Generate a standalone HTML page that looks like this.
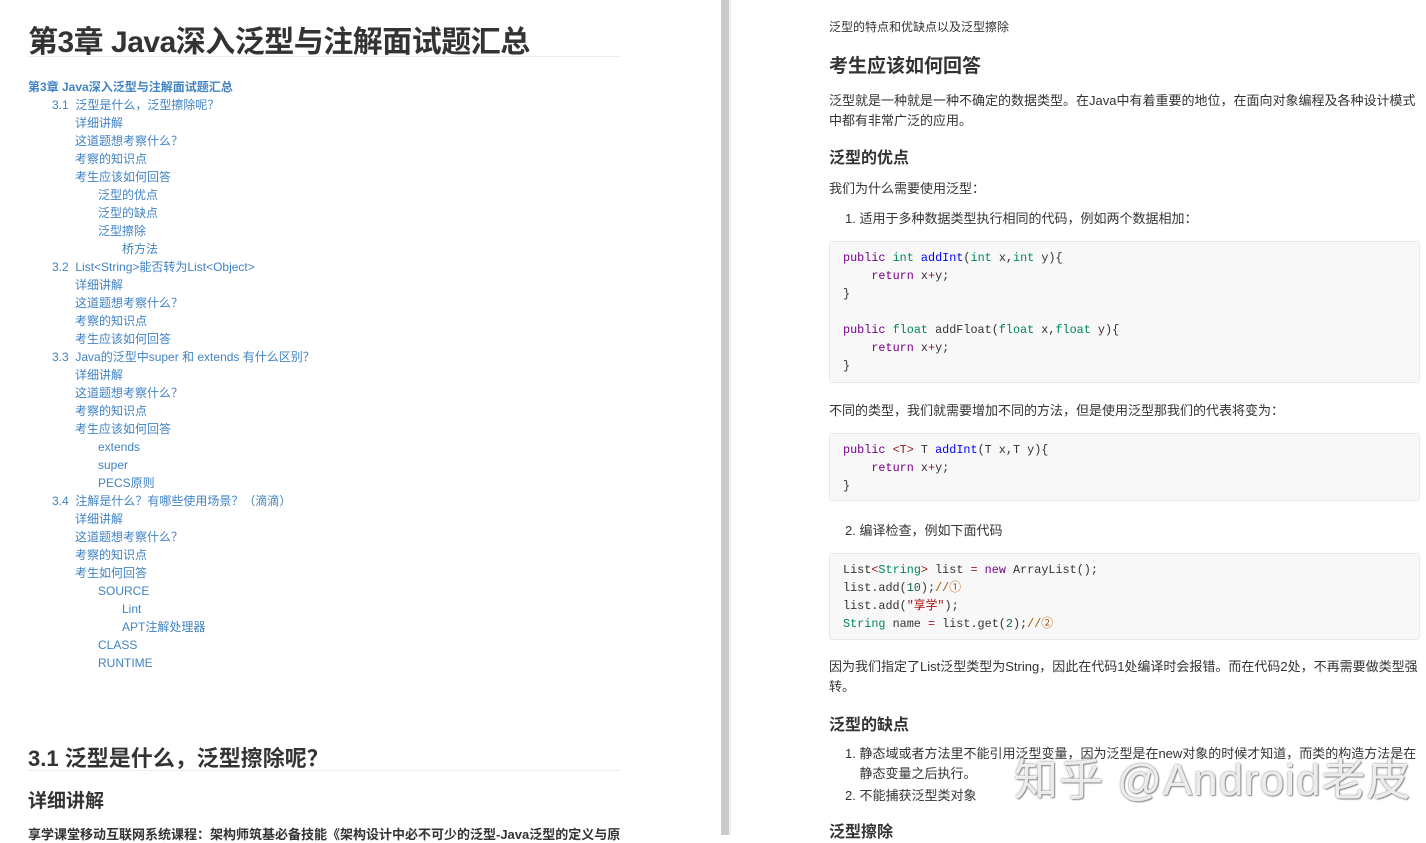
<!DOCTYPE html>
<html><head><meta charset="utf-8"><style>
body{margin:0;width:1426px;height:835px;overflow:hidden;background:#fff;font-family:"Liberation Sans","Noto Sans CJK SC",sans-serif;color:#333;position:relative}
.a{position:absolute;white-space:nowrap}
.t{position:absolute;font-size:12px;color:#4183c4;line-height:18px;white-space:nowrap}
.p{position:absolute;font-size:13px;color:#333;white-space:nowrap}
.h{position:absolute;font-weight:bold;color:#333;white-space:nowrap}
.code{position:absolute;left:829px;width:591px;background:#f8f8f8;border:1px solid #e7eaed;border-radius:3px;font-family:"Liberation Mono","Noto Sans CJK SC",monospace;font-size:11.8px;line-height:18px;padding:7px 0 0 13px;box-sizing:border-box;white-space:pre;color:#333}
.k{color:#770088}.ty{color:#008855}.f{color:#0000ff}.s{color:#aa1111}.n{color:#116644}.c{color:#aa5500}.o{color:#981a1a}
</style></head><body>
<div class="h" style="left:28px;top:17px;font-size:30px;letter-spacing:-0.5px">第3章 Java深入泛型与注解面试题汇总</div>
<div class="a" style="left:28px;top:56px;width:593px;height:1px;background:#eee"></div>
<div class="t" style="left:28px;top:78px;font-weight:bold">第3章 Java深入泛型与注解面试题汇总</div>
<div class="t" style="left:52px;top:96px">3.1&nbsp; 泛型是什么，泛型擦除呢？</div>
<div class="t" style="left:75px;top:114px">详细讲解</div>
<div class="t" style="left:75px;top:132px">这道题想考察什么？</div>
<div class="t" style="left:75px;top:150px">考察的知识点</div>
<div class="t" style="left:75px;top:168px">考生应该如何回答</div>
<div class="t" style="left:98px;top:186px">泛型的优点</div>
<div class="t" style="left:98px;top:204px">泛型的缺点</div>
<div class="t" style="left:98px;top:222px">泛型擦除</div>
<div class="t" style="left:122px;top:240px">桥方法</div>
<div class="t" style="left:52px;top:258px">3.2&nbsp; List&lt;String&gt;能否转为List&lt;Object&gt;</div>
<div class="t" style="left:75px;top:276px">详细讲解</div>
<div class="t" style="left:75px;top:294px">这道题想考察什么？</div>
<div class="t" style="left:75px;top:312px">考察的知识点</div>
<div class="t" style="left:75px;top:330px">考生应该如何回答</div>
<div class="t" style="left:52px;top:348px">3.3&nbsp; Java的泛型中super 和 extends 有什么区别？</div>
<div class="t" style="left:75px;top:366px">详细讲解</div>
<div class="t" style="left:75px;top:384px">这道题想考察什么？</div>
<div class="t" style="left:75px;top:402px">考察的知识点</div>
<div class="t" style="left:75px;top:420px">考生应该如何回答</div>
<div class="t" style="left:98px;top:438px">extends</div>
<div class="t" style="left:98px;top:456px">super</div>
<div class="t" style="left:98px;top:474px">PECS原则</div>
<div class="t" style="left:52px;top:492px">3.4&nbsp; 注解是什么？有哪些使用场景？（滴滴）</div>
<div class="t" style="left:75px;top:510px">详细讲解</div>
<div class="t" style="left:75px;top:528px">这道题想考察什么？</div>
<div class="t" style="left:75px;top:546px">考察的知识点</div>
<div class="t" style="left:75px;top:564px">考生如何回答</div>
<div class="t" style="left:98px;top:582px">SOURCE</div>
<div class="t" style="left:122px;top:600px">Lint</div>
<div class="t" style="left:122px;top:618px">APT注解处理器</div>
<div class="t" style="left:98px;top:636px">CLASS</div>
<div class="t" style="left:98px;top:654px">RUNTIME</div>
<div class="h" style="left:28px;top:741px;font-size:22px">3.1 泛型是什么，泛型擦除呢？</div>
<div class="a" style="left:28px;top:770px;width:593px;height:1px;background:#eee"></div>
<div class="h" style="left:28px;top:786px;font-size:19px">详细讲解</div>
<div class="p" style="left:28px;top:824px;font-weight:bold">享学课堂移动互联网系统课程：架构师筑基必备技能《架构设计中必不可少的泛型-Java泛型的定义与原</div>
<div class="a" style="left:721px;top:0;width:8px;height:835px;background:#cbcbcb"></div>
<div class="a" style="left:729px;top:0;width:2px;height:835px;background:#f0f0f0"></div>
<div class="p" style="left:829px;top:18px;font-size:12px">泛型的特点和优缺点以及泛型擦除</div>
<div class="h" style="left:829px;top:51px;font-size:19px">考生应该如何回答</div>
<div class="p" style="left:829px;top:91px;line-height:20px">泛型就是一种就是一种不确定的数据类型。在Java中有着重要的地位，在面向对象编程及各种设计模式<br>中都有非常广泛的应用。</div>
<div class="h" style="left:829px;top:144px;font-size:16px">泛型的优点</div>
<div class="p" style="left:829px;top:178px">我们为什么需要使用泛型：</div>
<div class="p" style="left:845px;top:208px">1. 适用于多种数据类型执行相同的代码，例如两个数据相加：</div>
<div class="code" style="top:241px;height:142px"><span class="k">public</span> <span class="ty">int</span> <span class="f">addInt</span>(<span class="ty">int</span> x,<span class="ty">int</span> y){
    <span class="k">return</span> x<span class="o">+</span>y;
}

<span class="k">public</span> <span class="ty">float</span> addFloat(<span class="ty">float</span> x,<span class="ty">float</span> y){
    <span class="k">return</span> x<span class="o">+</span>y;
}</div>
<div class="p" style="left:829px;top:400px">不同的类型，我们就需要增加不同的方法，但是使用泛型那我们的代表将变为：</div>
<div class="code" style="top:433px;height:68px"><span class="k">public</span> <span class="o">&lt;T&gt;</span> T <span class="f">addInt</span>(T x,T y){
    <span class="k">return</span> x<span class="o">+</span>y;
}</div>
<div class="p" style="left:845px;top:520px">2. 编译检查，例如下面代码</div>
<div class="code" style="top:553px;height:87px">List<span class="o">&lt;</span><span class="ty">String</span><span class="o">&gt;</span> list <span class="o">=</span> <span class="k">new</span> ArrayList();
list.add(<span class="n">10</span>);<span class="c">//①</span>
list.add(<span class="s">"享学"</span>);
<span class="ty">String</span> name <span class="o">=</span> list.get(<span class="n">2</span>);<span class="c">//②</span></div>
<div class="p" style="left:829px;top:657px;line-height:20px">因为我们指定了List泛型类型为String，因此在代码1处编译时会报错。而在代码2处，不再需要做类型强<br>转。</div>
<div class="h" style="left:829px;top:711px;font-size:16px">泛型的缺点</div>
<div class="p" style="left:845px;top:744px;line-height:20px">1. 静态域或者方法里不能引用泛型变量，因为泛型是在new对象的时候才知道，而类的构造方法是在<br>&nbsp;&nbsp;&nbsp;&nbsp;静态变量之后执行。</div>
<div class="p" style="left:845px;top:785px">2. 不能捕获泛型类对象</div>
<div class="a" style="left:1014px;top:744px;font-size:44px;letter-spacing:1px;color:rgba(255,255,255,0.85);text-shadow:0 0 2px #777,1px 1px 1px #999">知乎 @Android老皮</div>
<div class="h" style="left:829px;top:818px;font-size:16px">泛型擦除</div>
</body></html>
